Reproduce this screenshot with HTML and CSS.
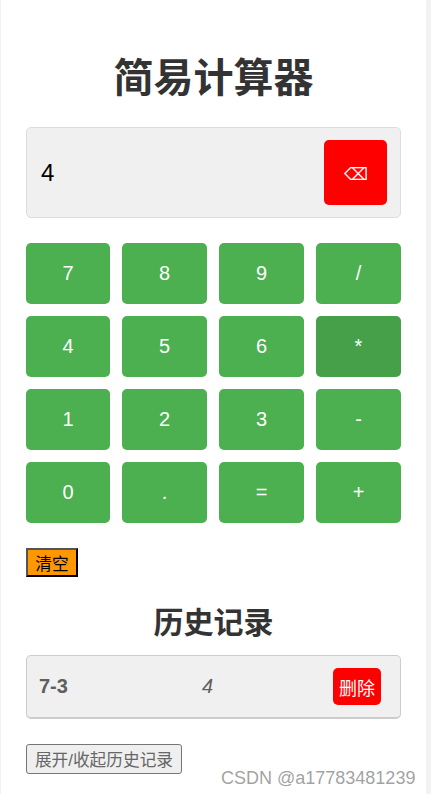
FILE: index.html
```html
<!DOCTYPE html>
<html lang="zh-CN">

<head>
    <meta charset="UTF-8">
    <meta name="viewport" content="width=device-width, initial-scale=1.0">
    <title>简易计算器</title>
    <link rel="stylesheet" href="styles.css">
</head>

<body>
    <div class="calculator">
        <h1>简易计算器</h1>
        <div class="display">
            <span class="value">4</span>
            <button class="backspace">⌫</button>
        </div>
        <div class="keys">
            <button class="key">7</button>
            <button class="key">8</button>
            <button class="key">9</button>
            <button class="key">/</button>
            <button class="key">4</button>
            <button class="key">5</button>
            <button class="key">6</button>
            <button class="key hover">*</button>
            <button class="key">1</button>
            <button class="key">2</button>
            <button class="key">3</button>
            <button class="key">-</button>
            <button class="key">0</button>
            <button class="key">.</button>
            <button class="key">=</button>
            <button class="key">+</button>
        </div>
        <button class="clear">清空</button>
        <h2>历史记录</h2>
        <div class="history-item">
            <span class="expr">7-3</span>
            <span class="result">4</span>
            <button class="delete">删除</button>
        </div>
        <button class="toggle">展开/收起历史记录</button>
    </div>
    <div class="watermark">CSDN @a17783481239</div>
</body>

</html>
```

FILE: styles.css
```css
html,
body {
    height: 100%;
}

body {
    margin: 0;
    overflow: hidden;
    background: #f2f2f2;
    font-family: "Liberation Sans", "Noto Sans CJK SC", sans-serif;
    color: #333;
}

.calculator {
    box-sizing: border-box;
    width: 425px;
    height: 820px;
    margin-left: 1px;
    margin-top: -6px;
    padding: 0 25px;
    background: #fff;
    border-radius: 8px;
}

h1 {
    margin: 0;
    padding-top: 56px;
    height: 77px;
    font-size: 40px;
    line-height: 56px;
    text-align: center;
}

.display {
    box-sizing: border-box;
    display: flex;
    align-items: center;
    justify-content: space-between;
    height: 91px;
    padding: 0 13px 0 14px;
    background: #f0f0f0;
    border: 1px solid #ddd;
    border-radius: 5px;
}

.value {
    font-size: 24px;
    color: #000;
}

.backspace {
    width: 63px;
    height: 65px;
    padding: 4px 0 0;
    border: none;
    border-radius: 5px;
    background: #f00;
    color: #fff;
    font-size: 17px;
}

.keys {
    display: grid;
    grid-template-columns: 84px 85px 85px 85px;
    gap: 12px;
    margin-top: 25px;
}

.key {
    height: 61px;
    border: none;
    border-radius: 5px;
    background: #4caf50;
    color: #fff;
    font-family: inherit;
    font-size: 20px;
}

.key.hover {
    background: #45a049;
}

.clear {
    display: block;
    box-sizing: border-box;
    width: 52px;
    height: 29px;
    margin-top: 25px;
    padding: 0;
    border: 2px outset #000;
    background: #ff9800;
    color: #000;
    font-family: inherit;
    font-size: 16.7px;
}

h2 {
    margin: 27px 0 0;
    font-size: 30px;
    line-height: 38px;
    text-align: center;
}

.history-item {
    box-sizing: border-box;
    display: flex;
    align-items: center;
    justify-content: space-between;
    height: 64px;
    margin-top: 13px;
    padding: 0 19px 0 12px;
    background: #f0f0f0;
    border: 1px solid #ccc;
    border-bottom-width: 2px;
    border-radius: 5px;
    color: #5f5f5f;
    font-size: 20px;
}

.expr {
    margin-right: 14px;
    font-weight: bold;
}

.result {
    font-style: italic;
}

.delete {
    width: 48px;
    height: 37px;
    padding: 0;
    border: none;
    border-radius: 5px;
    background: #f00;
    color: #fff;
    font-family: inherit;
    font-size: 18px;
}

.toggle {
    display: block;
    box-sizing: border-box;
    width: 156px;
    height: 30px;
    margin-top: 25px;
    padding: 0;
    border: 1px solid #767676;
    border-radius: 3px;
    background: #efefef;
    color: #666;
    font-family: inherit;
    font-size: 16.7px;
}

.watermark {
    position: absolute;
    left: 221px;
    top: 769px;
    color: rgba(80, 80, 80, 0.55);
    font-size: 18px;
    line-height: 19px;
    white-space: nowrap;
}
```
